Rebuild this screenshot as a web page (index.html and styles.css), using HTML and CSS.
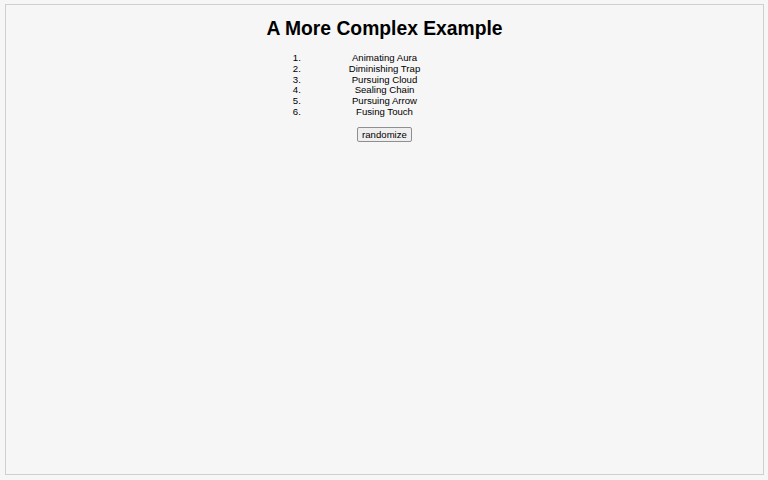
FILE: index.html
```html
<!DOCTYPE html>
<html>
<head>
<meta charset="utf-8">
<link rel="stylesheet" href="styles.css">
</head>
<body>
<div class="frame">
  <h1 class="title">A More Complex Example</h1>
  <ol class="list">
    <li>Animating Aura</li>
    <li>Diminishing Trap</li>
    <li>Pursuing Cloud</li>
    <li>Sealing Chain</li>
    <li>Pursuing Arrow</li>
    <li>Fusing Touch</li>
  </ol>
  <div class="actions">
    <button class="btn">randomize</button>
  </div>
</div>
</body>
</html>
```
FILE: styles.css
```css
html, body {
  margin: 0;
  padding: 0;
  height: 100%;
  background: #f6f6f6;
}
body {
  padding: 4px 4px 5px 5px;
  box-sizing: border-box;
  font-family: "Liberation Sans", Arial, sans-serif;
  color: #000;
}
.frame {
  box-sizing: border-box;
  height: 100%;
  border: 1px solid #cfcfcf;
  background: #f6f6f6;
  text-align: center;
  padding-top: 13px;
}
.title {
  margin: 0;
  font-size: 19.3px;
  font-weight: bold;
  line-height: 22px;
}
.list {
  width: 162px;
  margin: 13px auto 0;
  padding: 0;
  font-size: 9.6px;
  line-height: 10.8px;
  list-style-position: outside;
}
.list li {
  text-align: center;
}
.actions {
  margin-top: 6px;
}
.btn {
  font-family: "Liberation Sans", Arial, sans-serif;
  font-size: 9.6px;
  line-height: 11px;
  padding: 1px 4px;
  background: #efefef;
  border: 1px solid #8f8f8f;
  border-radius: 2px;
  color: #000;
}
```
